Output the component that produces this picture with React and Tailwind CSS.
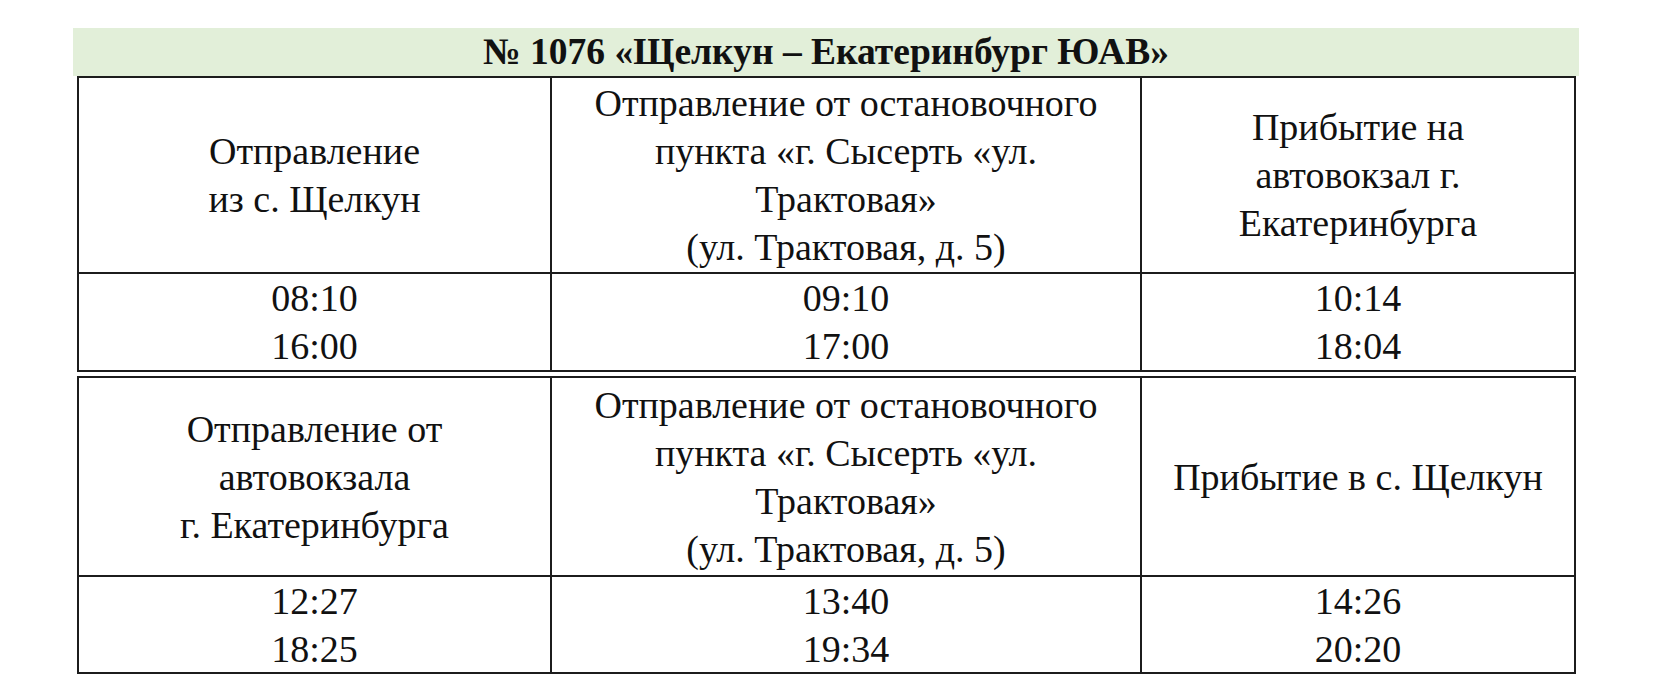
import React from "react";

const font = { fontFamily: '"Liberation Serif", "DejaVu Serif", serif' };

function Cell({ lines, className = "" }) {
  return (
    <div className={"flex flex-col items-center justify-center text-center " + className}>
      {lines.map((l, i) => (
        <div key={i} className="whitespace-nowrap">{l}</div>
      ))}
    </div>
  );
}

function Table({ head, times, headH, dataH }) {
  return (
    <div className="w-[1499px] border-2 border-[#1c1c1c] text-[38px] leading-[48px] text-[#111]">
      <div className={"grid grid-cols-[471px_590px_434px] " + headH}>
        <Cell lines={head[0]} />
        <Cell lines={head[1]} className="border-l-2 border-[#1c1c1c]" />
        <Cell lines={head[2]} className="border-l-2 border-[#1c1c1c]" />
      </div>
      <div className={"grid grid-cols-[471px_590px_434px] border-t-2 border-[#1c1c1c] " + dataH}>
        <Cell lines={times[0]} />
        <Cell lines={times[1]} className="border-l-2 border-[#1c1c1c]" />
        <Cell lines={times[2]} className="border-l-2 border-[#1c1c1c]" />
      </div>
    </div>
  );
}

export default function App() {
  const mid = [
    "Отправление от остановочного",
    "пункта «г. Сысерть «ул.",
    "Трактовая»",
    "(ул. Трактовая, д. 5)",
  ];
  return (
    <div className="w-[1654px] h-[693px] bg-white" style={font}>
      <div className="pt-[28px] pl-[73px]">
        <div className="w-[1506px] h-[48px] bg-[#e2efd9] flex items-center justify-center text-[37.5px] font-bold text-[#111]">
          № 1076 «Щелкун – Екатеринбург ЮАВ»
        </div>
        <div className="pl-[4px]">
          <Table
            head={[["Отправление", "из с. Щелкун"], mid, ["Прибытие на", "автовокзал г.", "Екатеринбурга"]]}
            times={[["08:10", "16:00"], ["09:10", "17:00"], ["10:14", "18:04"]]}
            headH="h-[194px]"
            dataH="h-[98px]"
          />
          <div className="h-[4px]" />
          <Table
            head={[["Отправление от", "автовокзала", "г. Екатеринбурга"], mid, ["Прибытие в с. Щелкун"]]}
            times={[["12:27", "18:25"], ["13:40", "19:34"], ["14:26", "20:20"]]}
            headH="h-[197px]"
            dataH="h-[97px]"
          />
        </div>
      </div>
    </div>
  );
}
